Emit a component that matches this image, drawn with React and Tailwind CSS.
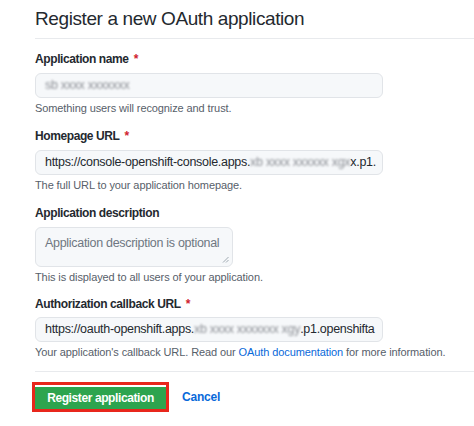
import React from 'react';

const Blur = ({ children }) => (
    <span className="blur-[1.2px] text-[#8d9096]">{children}</span>
);

const Label = ({ children, required }) => (
    <label className="block text-[12px] font-bold text-[#24292f] leading-[14px] tracking-[-0.4px] mb-[7px]">
        {children}
        {required && <span className="text-[#cf222e] ml-[5px]">*</span>}
    </label>
);

const Note = ({ children }) => (
    <p className="text-[11px] text-[#57606a] leading-[14px] tracking-[-0.1px] mt-[3px] whitespace-nowrap">{children}</p>
);

const Field = ({ children }) => (
    <div className="w-[348px] h-[25px] pl-[9px] flex items-center bg-[#f6f8fa] border border-[#e1e4e8] rounded-[6px] text-[12.5px] tracking-[-0.3px] text-[#24292f] whitespace-nowrap overflow-hidden">
        {children}
    </div>
);

export default function App() {
    return (
        <div className="w-[474px] h-[426px] bg-white overflow-hidden pl-[35px]" style={{ fontFamily: '"Liberation Sans", Arial, sans-serif' }}>
            <h1 className="text-[19px] text-[#24292f] leading-[26px] tracking-[-0.4px] pt-[6px] pb-[6px] border-b border-[#e8eaed]">
                Register a new OAuth application
            </h1>

            <div className="pt-[13px]">
                <Label required>Application name</Label>
                <Field><Blur>sb xxxx xxxxxxx</Blur></Field>
                <Note>Something users will recognize and trust.</Note>
            </div>

            <div className="pt-[14px]">
                <Label required>Homepage URL</Label>
                <Field>
                    <span>https://console-openshift-console.apps.</span>
                    <Blur>xb xxxx xxxxxx xgx</Blur>
                    <span>x.p1.</span>
                </Field>
                <Note>The full URL to your application homepage.</Note>
            </div>

            <div className="pt-[14px]">
                <Label>Application description</Label>
                <div className="relative w-[198px] h-[40px] pl-[9px] pt-[8px] bg-[#f6f8fa] border border-[#e1e4e8] rounded-[6px] text-[12.5px] leading-[14px] tracking-[-0.3px] text-[#6e7781] whitespace-nowrap">
                    Application description is optional
                    <svg className="absolute right-[3px] bottom-[3px]" width="7" height="7" viewBox="0 0 7 7">
                        <path d="M6.5 1 L1 6.5 M6.5 4 L4 6.5" stroke="#8c959f" strokeWidth="0.8" />
                    </svg>
                </div>
                <Note>This is displayed to all users of your application.</Note>
            </div>

            <div className="pt-[13px]">
                <Label required>Authorization callback URL</Label>
                <div className="-mt-[1px]">
                    <Field>
                        <span>https://oauth-openshift.apps.</span>
                        <Blur>xb xxxx xxxxxxx xgy</Blur>
                        <span>.p1.openshifta</span>
                    </Field>
                </div>
                <Note>
                    Your application's callback URL. Read our{' '}
                    <a className="text-[#0969da]">OAuth documentation</a> for more information.
                </Note>
            </div>

            <div className="mt-[12px] border-t border-[#e8eaed] pt-[10px] flex items-center">
                <div className="-ml-[3px] border-[3px] border-[#e8261c]">
                    <button className="w-[131px] h-[22px] bg-[#2da44e] text-white text-[12px] font-bold tracking-[-0.4px]">
                        Register application
                    </button>
                </div>
                <a className="ml-[13px] text-[12px] font-bold tracking-[-0.2px] text-[#0969da]">Cancel</a>
            </div>
        </div>
    );
}
